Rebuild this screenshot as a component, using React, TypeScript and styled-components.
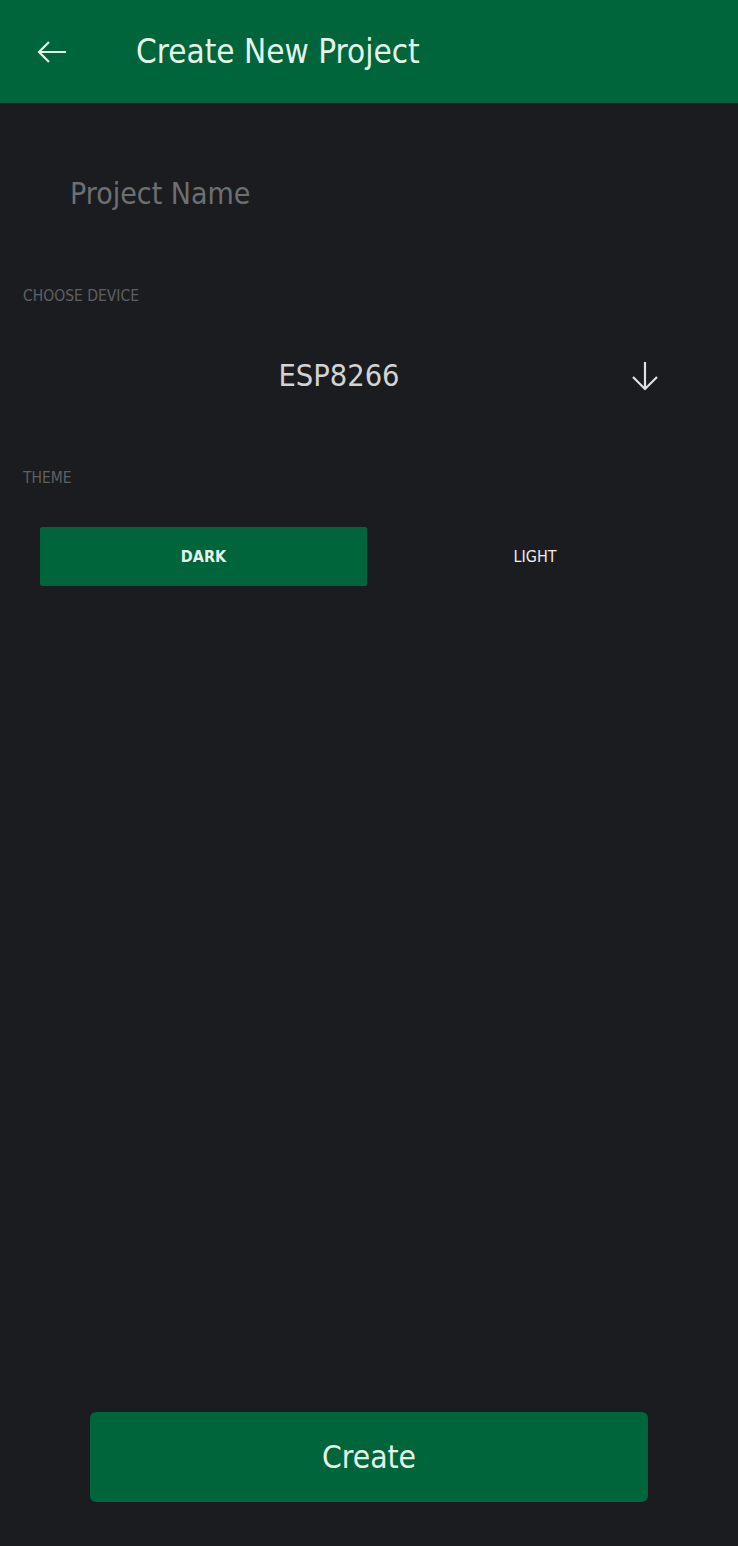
import React from "react";
import styled, { createGlobalStyle } from "styled-components";

const GlobalStyle = createGlobalStyle`
  html, body {
    margin: 0;
    padding: 0;
    background: #1b1c20;
  }
  body {
    font-family: "DejaVu Sans Condensed", Roboto, sans-serif;
  }
`;

const Screen = styled.div`
  display: flex;
  flex-direction: column;
  height: 1546px;
  background: #1b1c20;
`;

const Header = styled.header`
  align-items: center;
  background: #00653b;
  display: flex;
  height: 103px;
  padding-left: 37px;
  box-sizing: border-box;
`;

const BackButton = styled.button`
  background: none;
  border: none;
  display: flex;
  padding: 0;
  margin-right: 69px;
  cursor: pointer;
`;

const Title = styled.h1`
  color: #e4f3ea;
  font-size: 33px;
  font-weight: 400;
  margin: 0;
`;

const Body = styled.main`
  display: flex;
  flex-direction: column;
  flex-grow: 1;
  padding: 0 23px 44px;
`;

const NameInput = styled.input`
  background: transparent;
  border: none;
  color: #e0e0e0;
  font-family: inherit;
  font-size: 30px;
  margin: 68px 0 0 47px;
  outline: none;
  padding: 0;
  height: 44px;
  &::placeholder {
    color: #6d6f73;
  }
`;

const Label = styled.div<{ $top: number }>`
  color: #5e6064;
  font-size: 15.5px;
  text-transform: uppercase;
  margin-top: ${({ $top }) => $top}px;
`;

const DeviceRow = styled.div`
  align-items: center;
  display: flex;
  height: 60px;
  margin-top: 40px;
  padding-right: 60px;
  position: relative;
  justify-content: center;
`;

const Device = styled.div`
  color: #d2d3d5;
  font-size: 30.5px;
`;

const DropArrow = styled.div`
  display: flex;
  position: absolute;
  right: 56px;
  top: 16px;
`;

const Toggle = styled.div`
  display: grid;
  grid-template-columns: 327px 336px;
  height: 59px;
  margin: 40px 0 0 17px;
`;

const ToggleOption = styled.button<{ $active?: boolean }>`
  background: ${({ $active }) => ($active ? "#00653b" : "transparent")};
  border: none;
  border-radius: 2px;
  color: ${({ $active }) => ($active ? "#e4f3ea" : "#eeeeee")};
  font-family: inherit;
  font-size: 16px;
  font-weight: ${({ $active }) => ($active ? 700 : 400)};
  padding: 0;
`;

const CreateButton = styled.button`
  align-self: center;
  background: #00653b;
  border: none;
  border-radius: 6px;
  color: #e4f3ea;
  font-family: inherit;
  font-size: 31.5px;
  height: 90px;
  margin-top: auto;
  width: 558px;
`;

const App = () => {
  return (
    <>
      <GlobalStyle />
      <Screen>
        <Header>
          <BackButton aria-label="Back">
            <svg width="30" height="24" viewBox="0 0 30 24" fill="none">
              <path
                d="M29 12H2M12 2L2 12l10 10"
                stroke="#e4f3ea"
                strokeWidth="2.2"
              />
            </svg>
          </BackButton>
          <Title>Create New Project</Title>
        </Header>
        <Body>
          <NameInput placeholder="Project Name" />
          <Label $top={72}>Choose Device</Label>
          <DeviceRow>
            <Device>ESP8266</Device>
            <DropArrow>
              <svg width="28" height="30" viewBox="0 0 28 30" fill="none">
                <path
                  d="M14 1v27M2 16l12 12 12-12"
                  stroke="#e0e0e0"
                  strokeWidth="2.2"
                />
              </svg>
            </DropArrow>
          </DeviceRow>
          <Label $top={64}>Theme</Label>
          <Toggle>
            <ToggleOption $active>DARK</ToggleOption>
            <ToggleOption>LIGHT</ToggleOption>
          </Toggle>
          <CreateButton>Create</CreateButton>
        </Body>
      </Screen>
    </>
  );
};

export default App;
